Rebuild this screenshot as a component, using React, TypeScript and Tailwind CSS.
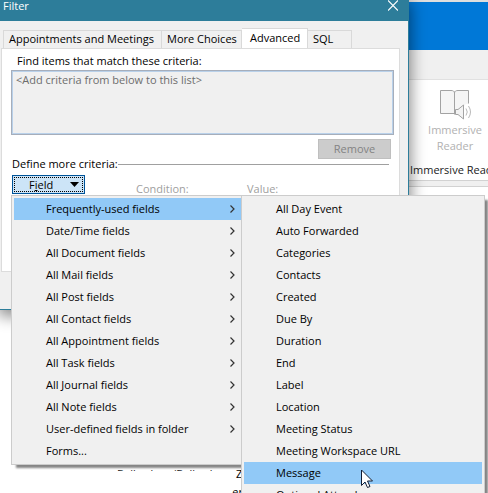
import { useState } from 'react';

const tabs = [
    { label: 'Appointments and Meetings', width: 'w-[159px]' },
    { label: 'More Choices', width: 'w-20' },
    { label: 'Advanced', width: 'w-[66px]' },
    { label: 'SQL', width: 'w-11' },
];

const fieldGroups = [
    'Frequently-used fields',
    'Date/Time fields',
    'All Document fields',
    'All Mail fields',
    'All Post fields',
    'All Contact fields',
    'All Appointment fields',
    'All Task fields',
    'All Journal fields',
    'All Note fields',
    'User-defined fields in folder',
    'Forms...',
];

const frequentFields = [
    'All Day Event',
    'Auto Forwarded',
    'Categories',
    'Contacts',
    'Created',
    'Due By',
    'Duration',
    'End',
    'Label',
    'Location',
    'Meeting Status',
    'Meeting Workspace URL',
    'Message',
    'Optional Attendees',
];

function Menu({ items, active, onHover, submenus, className }: {
    items: string[];
    active: string;
    onHover: (item: string) => void;
    submenus?: boolean;
    className: string;
}) {
    return (
        <div
            role="menu"
            className={`absolute border border-[#cccccc] bg-[#f0f0f0] p-0.5 shadow-[4px_4px_2px_-1px_#858585] ${className}`}
        >
            {items.map((item) => (
                <button
                    key={item}
                    role="menuitem"
                    onMouseEnter={() => onHover(item)}
                    className={`flex h-[22px] w-full items-center justify-between whitespace-nowrap pl-8 pr-1.5 text-left ${item === active ? 'bg-[#91c9f7]' : ''}`}
                >
                    {item}
                    {submenus && item !== 'Forms...' && (
                        <svg width="5" height="8" viewBox="0 0 5 8" fill="none" stroke="#333" strokeWidth="1.2">
                            <path d="M.5 .5 4 4 .5 7.5" />
                        </svg>
                    )}
                </button>
            ))}
        </div>
    );
}

function ImmersiveReaderIcon() {
    return (
        <svg width="34" height="30" viewBox="0 0 34 30" fill="none" stroke="#a3a3a3">
            <path d="M14.5 23.500h-14v-23h10.500c2 0 3.500 .6 3.500 2.500 0-1.900 1.500-2.500 3.500-2.500h10.500v13" fill="#f5f5f5" />
            <path d="M14.500 3v21.500" />
            <path d="M15 20h5l6-6h6v15h-16.500z" fill="#fff" stroke="none" />
            <path d="M15.500 19.500v5h2.500l5.500 4.500v-14l-5.500 4.500z" fill="#f3f3f3" />
            <path d="M26 18.500q2.500 3.500 0 7M28.500 16q4 6 0 12" stroke="#b9b9b9" />
        </svg>
    );
}

export default function App() {
    const [tab, setTab] = useState('Advanced');
    const [group, setGroup] = useState('Frequently-used fields');
    const [field, setField] = useState('Message');

    return (
        <div className="relative h-screen overflow-hidden bg-white font-['Open_Sans','Noto_Sans',sans-serif] text-[11px] text-black">
            {/* Main window behind the dialog */}
            <div className="h-0.5 bg-[#dedede]" />
            <div className="h-12 bg-[#0078d7]" />
            <div className="h-[30px] border-b border-[#e1e1e1] bg-[#f0f0f0]" />
            <div className="h-[100px] bg-white pl-[410px]">
                <button disabled className="flex w-[90px] flex-col items-center pt-2.5 text-[#b1b1b1]">
                    <span className="pl-1"><ImmersiveReaderIcon /></span>
                    <span className="pt-0.5 leading-4">Immersive<br />Reader</span>
                </button>
                <p className="mt-2 whitespace-nowrap leading-4 text-[#222222]">Immersive Reader</p>
            </div>
            <div className="h-[7px] border-y border-[#d2d2d2] bg-[#f0f0f0]" />
            <div className="flex w-[244px] items-start pl-[117px] pt-[278px] leading-[18px]">
                <div className="flex h-1.5 w-[119px] gap-5 overflow-hidden whitespace-nowrap text-[#222222]">
                    <span>Ballard</span>
                    <span>(Ballard</span>
                </div>
                <span>Z</span>
            </div>
            <p className="w-[243px] pt-0.5 text-right leading-[14px]">er</p>

            {/* Filter dialog */}
            <div className="absolute left-0 top-0 h-[310px] w-[409px] border-b border-r border-[#2d7d9a] bg-[#f0f0f0] shadow-[0_4px_14px_2px_rgba(0,0,0,0.45)]">
                <div className="flex h-[21px] items-start justify-between bg-[#2d7d9a] pl-[3px] pr-2.5 text-white">
                    <h1 className="leading-3">Filter</h1>
                    <button aria-label="Close">
                        <svg width="10" height="11" viewBox="0 0 10 11" stroke="white" strokeWidth="1.200">
                            <path d="M0 0.500 10 10.500M10 0.500 0 10.500" />
                        </svg>
                    </button>
                </div>

                <div role="tablist" className="flex h-[27px] items-end pl-[3px]">
                    {tabs.map((t) => (
                        <button
                            key={t.label}
                            role="tab"
                            aria-selected={tab === t.label}
                            onClick={() => setTab(t.label)}
                            className={`whitespace-nowrap border-r border-t border-[#d9d9d9] text-left first:border-l ${t.width} ${tab === t.label ? 'h-5 bg-white pl-2' : 'h-[18px] pl-[5px]'}`}
                        >
                            {t.label}
                        </button>
                    ))}
                </div>

                <div className="ml-px mr-2 h-[224px] border border-[#dcdcdc] bg-white pl-[9px] pr-[5px]">
                    <h2 className="pl-1.5 pt-0.5 leading-[19px]">Find items that match these criteria:</h2>
                    <div className="h-[65px] border border-[#a6aebb] bg-[#b9d1ea] p-px">
                        <div className="h-full bg-[#f0f0f0] pl-[3px] leading-4 text-[#6d6d6d]">&lt;Add criteria from below to this list&gt;</div>
                    </div>
                    <div className="flex justify-end pr-[3px] pt-1">
                        <button disabled className="h-5 w-[73px] border border-[#bfbfbf] bg-[#cccccc] text-[#838383]">Remove</button>
                    </div>
                    <div className="flex items-center pl-px pr-[5px] leading-[10px]">
                        <h2>Define more criteria:</h2>
                        <div className="h-px flex-1 bg-[#a0a0a0]" />
                    </div>
                    <div className="flex pl-px pt-1.5">
                        <button className="h-[19px] w-[73px] shrink-0 border border-[#005499] bg-[#cce4f7] p-px">
                            <span className="flex h-full items-center justify-between border border-dotted border-black pl-3.5 pr-[3px] leading-3">
                                <span>F<u>i</u>eld</span>
                                <svg width="9" height="5" viewBox="0 0 9 5"><path d="M0 0h9L4.500 5z" /></svg>
                            </span>
                        </button>
                        <span className="w-[162px] shrink-0 pl-[51px] pt-1.5 leading-4 text-[#a0a0a0]">Condition:</span>
                        <span className="pt-1.5 leading-4 text-[#a0a0a0]">Value:</span>
                    </div>
                </div>
            </div>

            <Menu items={fieldGroups} active={group} onHover={setGroup} submenus className="left-[11px] top-[195px] w-[233px]" />
            <Menu items={frequentFields} active={field} onHover={setField} className="left-[241px] top-[195px] w-[244px]" />

            {/* Mouse pointer */}
            <svg className="pointer-events-none absolute left-[361px] top-[469px]" width="13" height="20" viewBox="0 0 13 20" fill="white" stroke="#111c33">
                <path d="M.5 1v15.500l3.500-3.500 2.500 5.500 2.500-1-2.500-5.500h5z" />
            </svg>
        </div>
    );
}
